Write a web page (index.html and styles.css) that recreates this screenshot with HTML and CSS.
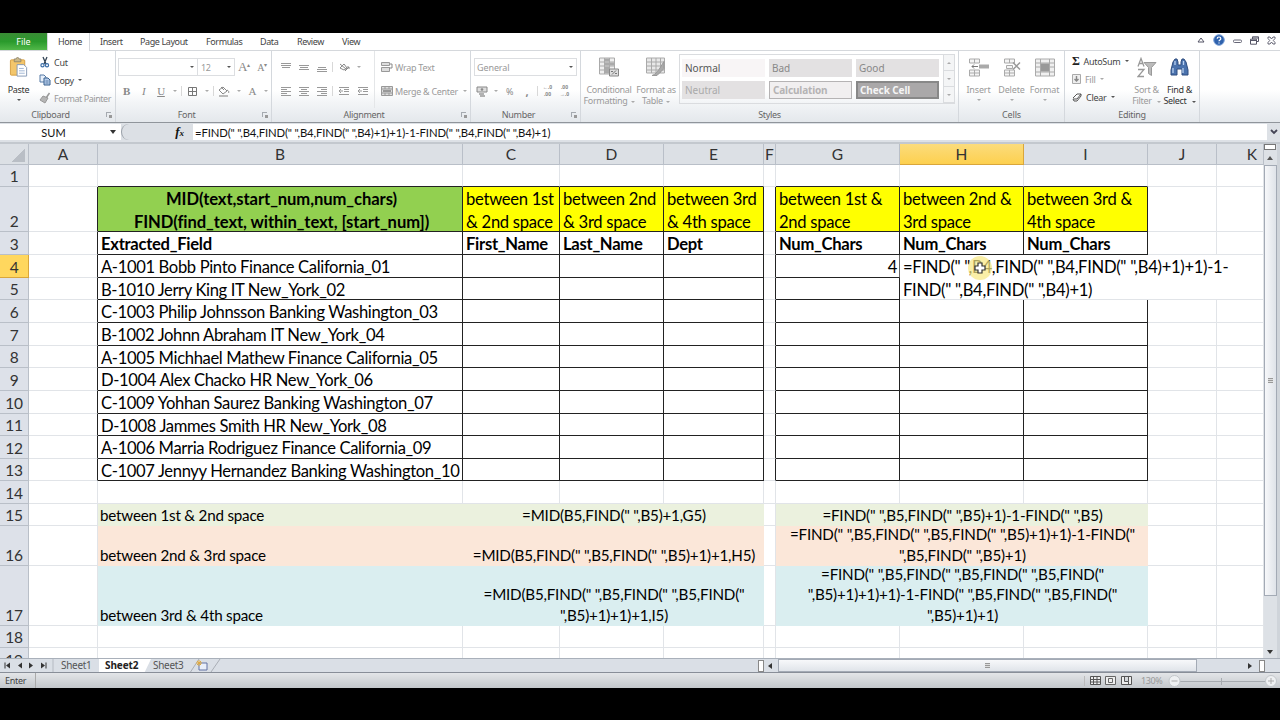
FILE: index.html
```html
<!DOCTYPE html>
<html lang="en">
<head>
    <meta charset="UTF-8">
    <meta name="viewport" content="width=device-width, initial-scale=1.0">
    <title>Spreadsheet</title>
    <link rel="stylesheet" href="styles.css">
</head>
<body>
    <svg class="defs">
      <symbol id="top" viewBox="0 0 10 10"><path d="M0 1.5h10M0 3.5h10M1 5.5h8" /></symbol>
      <symbol id="middle" viewBox="0 0 10 10"><path d="M0 3.5h10M1 5.5h8M0 7.5h10" /></symbol>
      <symbol id="bottom" viewBox="0 0 10 10"><path d="M1 5.5h8M0 7.5h10M0 9.5h10" /></symbol>
      <symbol id="left" viewBox="0 0 10 10"><path d="M0 1.5h10M0 3.5h6M0 5.5h10M0 7.5h6M0 9.5h10" /></symbol>
      <symbol id="center" viewBox="0 0 10 10"><path d="M0 1.5h10M2 3.5h6M0 5.5h10M2 7.5h6M0 9.5h10" /></symbol>
      <symbol id="right" viewBox="0 0 10 10"><path d="M0 1.5h10M4 3.5h6M0 5.5h10M4 7.5h6M0 9.5h10" /></symbol>
      <symbol id="indent" viewBox="0 0 10 10"><path d="M0 1.5h10M5 3.5h5M5 5.5h5M0 8.5h10M4 5H0M2 3L0 5l2 2" /></symbol>
    </svg>

    <div class="app">
      <div class="tabs">
        <div class="file">File</div>
        <div class="tab active">Home</div>
        <div class="tab insert">Insert</div>
        <div class="tab layout">Page Layout</div>
        <div class="tab formulas">Formulas</div>
        <div class="tab data">Data</div>
        <div class="tab review">Review</div>
        <div class="tab view">View</div>
        <div class="window-buttons">
          <svg width="8" height="8" viewBox="0 0 8 8"><path d="M1 6l3-4 3 4z" fill="#fff" stroke="#556" /></svg>
          <svg width="12" height="12" viewBox="0 0 12 12"><circle cx="6" cy="6" r="5.3" fill="#2f62ad" stroke="#7fa3d8" /><path d="M4.2 4.8c0-2.4 3.6-2.4 3.6 0 0 1.2-1.8 1.2-1.8 2.4M6 8.4v1.1" fill="none" stroke="#fff" stroke-width="1.2" /></svg>
          <svg width="9" height="9" viewBox="0 0 9 9"><rect x=".5" y="4" width="8" height="2.5" rx="1" fill="#fff" stroke="#667" /></svg>
          <svg width="9" height="9" viewBox="0 0 9 9"><path d="M2.5 3V.8h6v4.7H7M.5 3.2h6v5h-6zM1 4.5h5M3 2h5" fill="none" stroke="#556" /></svg>
          <svg width="9" height="9" viewBox="0 0 9 9"><path d="M1 1h2l1.5 2L6 1h2v1.500L6.300 4.500 8 6.500V8H6L4.500 6 3 8H1V6.500l1.700-2L1 2.500z" fill="#fff" stroke="#556" stroke-width=".9" /></svg>
        </div>
      </div>

      <div class="ribbon">
        <div class="group clipboard">
          <div class="group-body">
            <div class="big">
              <svg width="20" height="22" viewBox="0 0 20 22"><rect x="1" y="3" width="15" height="16" rx="1" fill="#f3c66b" stroke="#d79f43" /><path d="M5 4V2h2c0-2 3-2 3 0h2v3H5z" fill="#c9b88a" stroke="#867b62" stroke-width=".8" /><path d="M8 8h7l3 3v9H8z" fill="#fff" stroke="#8599b5" /><path d="M10 12h5M10 14.500h6M10 17h6" stroke="#9eb4d3" /></svg>
              <span>Paste</span>
              <i class="arrow"></i>
            </div>
            <div class="lines">
              <div class="line">
                <svg width="12" height="12" viewBox="0 0 12 12"><path d="M4 1l3 7M8 1L5 8" stroke="#345" stroke-width="1.300" /><circle cx="3.500" cy="9.200" r="1.600" fill="none" stroke="#3b6ea8" stroke-width="1.200" /><circle cx="8" cy="9.200" r="1.600" fill="none" stroke="#3b6ea8" stroke-width="1.200" /></svg>
                <span>Cut</span>
              </div>
              <div class="line">
                <svg width="12" height="12" viewBox="0 0 12 12"><path d="M1 1h4l2 2v5H1z" fill="#e8f0fa" stroke="#5478a5" /><path d="M5 4h4l2 2v5H5z" fill="#b7cdea" stroke="#38608f" /><path d="M6.500 7h3M6.500 9h3" stroke="#38608f" stroke-width=".7" /></svg>
                <span>Copy</span><i class="arrow"></i>
              </div>
              <div class="line off">
                <svg width="12" height="12" viewBox="0 0 12 12"><path d="M10.500 1L7 6" stroke="#999" stroke-width="1.500" /><path d="M4 4l5 2-3 5-5-3z" fill="#b5b5b5" stroke="#999" /></svg>
                <span class="painter">Format Painter</span>
              </div>
            </div>
          </div>
          <div class="group-name">Clipboard<b class="launcher"></b></div>
        </div>

        <div class="group font">
          <div class="group-body stack">
            <div class="row">
              <div class="combo family"><span></span><i class="arrow"></i></div>
              <div class="combo size"><span>12</span><i class="arrow"></i></div>
              <span class="tool serif grow">A<sup>▴</sup></span>
              <span class="tool serif shrink">A<sup>▾</sup></span>
            </div>
            <div class="row">
              <span class="tool serif"><b>B</b></span>
              <span class="tool serif"><em>I</em></span>
              <span class="tool serif"><u>U</u></span>
              <i class="arrow pale"></i><i class="sep"></i>
              <span class="tool wide"><svg width="9" height="9" viewBox="0 0 9 9"><path d="M.5.5h8v8h-8zM4.500.5v8M.5 4.500h8" fill="none" stroke="#777" /></svg></span>
              <i class="arrow pale"></i><i class="sep"></i>
              <span class="tool wide"><svg width="12" height="11" viewBox="0 0 12 11"><path d="M1 4l4-3 4 4-4 3zM3 1l3 3M9 4c2 1 2 2 1.500 3" fill="none" stroke="#888" /><path d="M1 10h9" stroke="#bbb" stroke-width="2" /></svg></span>
              <i class="arrow pale"></i>
              <span class="tool serif">A</span>
              <i class="arrow pale"></i>
            </div>
          </div>
          <div class="group-name">Font<b class="launcher"></b></div>
        </div>

        <div class="group alignment">
          <div class="group-body">
            <div class="stack align-tools">
              <div class="row">
                <span class="tool"><svg class="ic"><use href="#top" /></svg></span>
                <span class="tool"><svg class="ic"><use href="#middle" /></svg></span>
                <span class="tool"><svg class="ic"><use href="#bottom" /></svg></span>
                <i class="sep"></i>
                <span class="tool wide"><svg width="11" height="10" viewBox="0 0 11 10"><path d="M1 2l6 5M1 6l4-4 3 4-3 2zM6 9l4-4M8 5h2v2" fill="none" stroke="#888" /></svg></span>
                <i class="arrow pale"></i>
              </div>
              <div class="row">
                <span class="tool"><svg class="ic"><use href="#left" /></svg></span>
                <span class="tool"><svg class="ic"><use href="#center" /></svg></span>
                <span class="tool"><svg class="ic"><use href="#right" /></svg></span>
                <i class="sep"></i>
                <span class="tool wide"><svg class="ic"><use href="#indent" /></svg></span>
                <span class="tool"><svg class="ic"><use href="#indent" /></svg></span>
              </div>
            </div>
            <div class="stack wrap-tools">
              <div class="row off">
                <svg width="12" height="10" viewBox="0 0 12 10"><path d="M.5.5h8v3h-8zM.5 5.500h8v4h-8z" fill="#ddd" stroke="#999" /><path d="M9 2h2v4H8" fill="none" stroke="#888" /></svg>
                <span class="wrap-text">Wrap Text</span>
              </div>
              <div class="row off">
                <svg width="12" height="10" viewBox="0 0 12 10"><path d="M.5.5h11v9H.5zM.5 3h11M.5 7h11M4 .5V3M8 .5V3M4 7v2.500M8 7v2.500" fill="#ddd" stroke="#999" /><path d="M2 5h8" stroke="#555" /></svg>
                <span class="merge-text">Merge &amp; Center</span><i class="arrow pale"></i>
              </div>
            </div>
          </div>
          <div class="group-name">Alignment<b class="launcher"></b></div>
        </div>

        <div class="group number">
          <div class="group-body stack">
            <div class="row">
              <div class="combo general"><span>General</span><i class="arrow"></i></div>
            </div>
            <div class="row">
              <span class="tool"><svg width="12" height="11" viewBox="0 0 12 11"><path d="M1 1h10v5H1z" fill="#ddd" stroke="#888" /><circle cx="6" cy="3.500" r="1.300" fill="#888" /><path d="M3 8h5M4 10h5" stroke="#999" stroke-width="1.500" /></svg></span>
              <i class="arrow pale"></i>
              <span class="tool percent-sign">%</span>
              <span class="tool comma">,</span>
              <i class="sep"></i>
              <span class="tool dec"><span>←.0</span><span>.00</span></span>
              <span class="tool dec"><span>.00</span><span>→.0</span></span>
            </div>
          </div>
          <div class="group-name">Number<b class="launcher"></b></div>
        </div>

        <div class="group style-group">
          <div class="group-body">
            <div class="big off cond">
              <svg width="20" height="20" viewBox="0 0 20 20"><path d="M.5.500h15v16H.5zM.5 4.500h15M.5 8.500h15M.5 12.500h15M5.500.5v16M10.500.5v16" fill="#eee" stroke="#aaa" /><path d="M6 1h4v3H6zM6 5h9v3H6zM6 9h4v7H6z" fill="#aaa" /><path d="M10.500 11.500h9v7h-9z" fill="#ddd" stroke="#888" /><path d="M12 14h2M16 16h2M13 17l4-4" stroke="#777" /></svg>
              <span>Conditional</span>
              <span>Formatting<i class="arrow pale"></i></span>
            </div>
            <div class="big off">
              <svg width="20" height="20" viewBox="0 0 20 20"><path d="M.5.500h18v15H.5zM.5 4.500h18M.5 8.500h18M.5 12.500h18M5.500.5v15M10 .5v15M14.500.5v15" fill="#e8e8e8" stroke="#aaa" /><path d="M18 4v7l-7 7H6c4-1 5-4 7-6z" fill="#aaa" stroke="#999" /></svg>
              <span>Format as</span>
              <span>Table<i class="arrow pale"></i></span>
            </div>
            <div class="gallery">
              <div class="swatches">
                <div class="swatch normal">Normal</div>
                <div class="swatch bad">Bad</div>
                <div class="swatch good">Good</div>
                <div class="swatch neutral">Neutral</div>
                <div class="swatch calculation">Calculation</div>
                <div class="swatch check">Check Cell</div>
              </div>
              <div class="gallery-scroll">
                <div><i class="arrow up pale"></i></div>
                <div><i class="arrow pale"></i></div>
                <div><i class="arrow pale"></i></div>
              </div>
            </div>
          </div>
          <div class="group-name">Styles</div>
        </div>

        <div class="group cells">
          <div class="group-body">
            <div class="big off">
              <svg width="20" height="20" viewBox="0 0 20 20"><path d="M.5 1.500h10v4H.5zM5.500 1.500v4M.5 12.500h10v6H.5zM5.500 12.500v6M.5 15.500h10" fill="#f4f4f4" stroke="#aaa" /><path d="M10 7h10v4H10z" fill="#aaa" /><path d="M9 9H3M5 7L3 9l2 2" fill="none" stroke="#777" /></svg>
              <span>Insert</span><i class="arrow pale"></i>
            </div>
            <div class="big off">
              <svg width="20" height="20" viewBox="0 0 20 20"><path d="M2.500 1.500h10v4h-10zM7.500 1.500v4M2.500 12.500h10v6h-10zM7.500 12.500v6M2.500 15.500h10M4.500 8h6v3h-6z" fill="#f4f4f4" stroke="#aaa" /><path d="M11 5l7 7M18 5l-7 7" stroke="#999" stroke-width="1.500" /></svg>
              <span>Delete</span><i class="arrow pale"></i>
            </div>
            <div class="big off">
              <svg width="20" height="20" viewBox="0 0 20 20"><path d="M.5 1.500h19v17H.5zM.5 5.500h19M.5 9.500h19M.5 14.500h19M5.500 1.500v17M14.500 1.500v17" fill="#f0f0f0" stroke="#aaa" /><path d="M6 6h8v8H6z" fill="#999" /></svg>
              <span>Format</span><i class="arrow pale"></i>
            </div>
          </div>
          <div class="group-name">Cells</div>
        </div>

        <div class="group editing">
          <div class="group-body">
            <div class="lines">
              <div class="line"><span class="sigma">Σ</span><span>AutoSum</span><i class="arrow"></i></div>
              <div class="line off">
                <svg width="9" height="10" viewBox="0 0 9 10"><path d="M.5.500h8v9h-8z" fill="#eee" stroke="#aaa" /><path d="M4.500 2v5M2.500 5l2 2 2-2" fill="none" stroke="#888" stroke-width="1.400" /></svg>
                <span>Fill</span><i class="arrow pale"></i>
              </div>
              <div class="line">
                <svg width="10" height="9" viewBox="0 0 10 9"><path d="M1 5l4-4h4L5 6H1l1 2h3l4-5V1" fill="#fff" stroke="#555" /></svg>
                <span>Clear</span><i class="arrow"></i>
              </div>
            </div>
            <div class="big off sort">
              <svg width="20" height="20" viewBox="0 0 20 20"><path d="M1 9l3-8 3 8M2 6h4M1 12h6L1 19h6" fill="none" stroke="#999" stroke-width="1.300" /><path d="M7 5h12l-4.500 5v8l-3-2v-6z" fill="#bbb" stroke="#999" /></svg>
              <span>Sort &amp;</span>
              <span>Filter <i class="arrow pale"></i></span>
            </div>
            <div class="big">
              <svg width="19" height="19" viewBox="0 0 19 19"><path d="M3 4l2-3h2l1 3v3h3V4l1-3h2l2 3 2 8v5h-6v-6H7v6H1v-5z" fill="#4a72ad" stroke="#2e4c7e" /><path d="M3 10v5M13 10v5M5 3v4M13.500 3v4" stroke="#b8d0f0" stroke-width="1.300" /></svg>
              <span>Find &amp;</span>
              <span>Select <i class="arrow"></i></span>
            </div>
          </div>
          <div class="group-name">Editing</div>
        </div>
      </div>

      <div class="formula-bar">
        <div class="name-box"><span>SUM</span><i class="arrow dark"></i></div>
        <div class="fx"><span class="knob"></span><span class="fx-label">f<small>x</small></span></div>
        <div class="formula">=FIND(" ",B4,FIND(" ",B4,FIND(" ",B4)+1)+1)-1-FIND(" ",B4,FIND(" ",B4)+1)</div>
        <div class="expand"><svg width="8" height="6" viewBox="0 0 8 6"><path d="M1 1l3 3 3-3" fill="none" stroke="#445" stroke-width="1.800" /></svg></div>
      </div>

      <div class="work">
        <div class="sheet">
          <div class="corner"></div><div class="ch">A</div><div class="ch">B</div><div class="ch">C</div><div class="ch">D</div><div class="ch">E</div><div class="ch">F</div><div class="ch">G</div><div class="ch on">H</div><div class="ch">I</div><div class="ch">J</div><div class="ch k">K</div>

          <div class="rh">1</div><div></div><div class="kb"></div><div class="kb"></div><div class="kb"></div><div class="kb"></div><div></div><div class="kb"></div><div class="kb"></div><div class="kb"></div><div></div><div></div>

          <div class="rh">2</div><div class="kr"></div>
          <div class="box title"><span class="t1">MID(text,start_num,num_chars)</span><span class="t2">FIND(find_text, within_text, [start_num])</span></div>
          <div class="box note">between 1st<br>&amp; 2nd space</div><div class="box note">between 2nd<br>&amp; 3rd space</div><div class="box note">between 3rd<br>&amp; 4th space</div><div class="kr"></div>
          <div class="box note">between 1st &amp;<br>2nd space</div><div class="box note">between 2nd &amp;<br>3rd space</div><div class="box note">between 3rd &amp;<br>4th space</div><div></div><div></div>

          <div class="rh">3</div><div class="kr"></div><div class="box head">Extracted_Field</div><div class="box head">First_Name</div><div class="box head">Last_Name</div><div class="box head">Dept</div><div class="kr"></div><div class="box head">Num_Chars</div><div class="box head">Num_Chars</div><div class="box head">Num_Chars</div><div></div><div></div>

          <div class="rh on">4</div><div class="kr"></div><div class="box">A-1001 Bobb Pinto Finance California_01</div><div class="box"></div><div class="box"></div><div class="box"></div><div class="kr"></div><div class="box num">4</div>
          <div class="edit"><span>=FIND(" ",B4,FIND(" ",B4,FIND(" ",B4)+1)+1)-1-</span><span class="e2">FIND(" ",B4,FIND(" ",B4)+1)</span>
            <div class="pointer"><svg width="12" height="12" viewBox="0 0 12 12"><path d="M4 1h4v3h3v4H8v3H4V8H1V4h3z" fill="#fff" stroke="#333" stroke-width="1.200" /></svg></div>
          </div>

          <div class="rh">5</div><div class="kr"></div><div class="box">B-1010 Jerry King IT New_York_02</div><div class="box"></div><div class="box"></div><div class="box"></div><div class="kr"></div><div class="box"></div>

          <div class="rh">6</div><div class="kr"></div><div class="box">C-1003 Philip Johnsson Banking Washington_03</div><div class="box"></div><div class="box"></div><div class="box"></div><div class="kr"></div><div class="box"></div><div class="box"></div><div class="box"></div><div></div><div></div>

          <div class="rh">7</div><div class="kr"></div><div class="box">B-1002 Johnn Abraham IT New_York_04</div><div class="box"></div><div class="box"></div><div class="box"></div><div class="kr"></div><div class="box"></div><div class="box"></div><div class="box"></div><div></div><div></div>

          <div class="rh">8</div><div class="kr"></div><div class="box">A-1005 Michhael Mathew Finance California_05</div><div class="box"></div><div class="box"></div><div class="box"></div><div class="kr"></div><div class="box"></div><div class="box"></div><div class="box"></div><div></div><div></div>

          <div class="rh">9</div><div class="kr"></div><div class="box">D-1004 Alex Chacko HR New_York_06</div><div class="box"></div><div class="box"></div><div class="box"></div><div class="kr"></div><div class="box"></div><div class="box"></div><div class="box"></div><div></div><div></div>

          <div class="rh">10</div><div class="kr"></div><div class="box">C-1009 Yohhan Saurez Banking Washington_07</div><div class="box"></div><div class="box"></div><div class="box"></div><div class="kr"></div><div class="box"></div><div class="box"></div><div class="box"></div><div></div><div></div>

          <div class="rh">11</div><div class="kr"></div><div class="box">D-1008 Jammes Smith HR New_York_08</div><div class="box"></div><div class="box"></div><div class="box"></div><div class="kr"></div><div class="box"></div><div class="box"></div><div class="box"></div><div></div><div></div>

          <div class="rh">12</div><div class="kr"></div><div class="box">A-1006 Marria Rodriguez Finance California_09</div><div class="box"></div><div class="box"></div><div class="box"></div><div class="kr"></div><div class="box"></div><div class="box"></div><div class="box"></div><div></div><div></div>

          <div class="rh">13</div><div class="kr"></div><div class="box">C-1007 Jennyy Hernandez Banking Washington_10</div><div class="box"></div><div class="box"></div><div class="box"></div><div class="kr"></div><div class="box"></div><div class="box"></div><div class="box"></div><div></div><div></div>

          <div class="rh">14</div><div></div><div></div><div></div><div></div><div></div><div></div><div></div><div></div><div></div><div></div><div></div>

          <div class="rh">15</div><div></div><div class="small green">between 1st &amp; 2nd space</div><div class="small green span3">=MID(B5,FIND(" ",B5)+1,G5)</div><div></div><div class="small green span3">=FIND(" ",B5,FIND(" ",B5)+1)-1-FIND(" ",B5)</div><div></div><div></div>

          <div class="rh">16</div><div></div><div class="small peach">between 2nd &amp; 3rd space</div><div class="small peach span3">=MID(B5,FIND(" ",B5,FIND(" ",B5)+1)+1,H5)</div><div></div><div class="small peach span3">=FIND(" ",B5,FIND(" ",B5,FIND(" ",B5)+1)+1)-1-FIND("<br>",B5,FIND(" ",B5)+1)</div><div></div><div></div>

          <div class="rh">17</div><div></div><div class="small blue">between 3rd &amp; 4th space</div><div class="small blue span3">=MID(B5,FIND(" ",B5,FIND(" ",B5,FIND("<br>",B5)+1)+1)+1,I5)</div><div></div><div class="small blue span3">=FIND(" ",B5,FIND(" ",B5,FIND(" ",B5,FIND("<br>",B5)+1)+1)+1)-1-FIND(" ",B5,FIND(" ",B5,FIND("<br>",B5)+1)+1)</div><div></div><div></div>

          <div class="rh">18</div><div></div><div></div><div></div><div></div><div></div><div></div><div></div><div></div><div></div><div></div><div></div>

          <div class="rh">19</div><div></div><div></div><div></div><div></div><div></div><div></div><div></div><div></div><div></div><div></div><div></div>
        </div>
        <div class="vscroll">
          <div class="split"></div>
          <div class="vbtn"><i class="arrow dark up"></i></div>
          <div class="vthumb"><span></span></div>
          <div class="vbtn down"><i class="arrow dark"></i></div>
        </div>
      </div>

      <div class="sheet-bar">
        <svg class="nav" width="54" height="13" viewBox="0 0 54 13"><path d="M10 3.500v6L6 6.500zM22 3.500v6l-4-3zM29 3.500v6l4-3zM41 3.500v6l4-3z" fill="#333" /><path d="M5 3.500v6M46 3.500v6" stroke="#333" /><path d="M53 0v13" stroke="#b5bac2" /></svg>
        <div class="sheet-tab">Sheet1</div>
        <div class="sheet-tab current">Sheet2</div>
        <div class="sheet-tab third">Sheet3</div>
        <svg class="new-sheet" width="34" height="13" viewBox="0 0 34 13"><path d="M.5 13L9 0M21 13L30 0" stroke="#a9aeb6" /><path d="M9 4h8v7H9z" fill="#e9effa" stroke="#6372a3" /><path d="M6 4h6M9 1v6M7 2l4 4M11 2L7 6" stroke="#dfaa42" /></svg>
        <div class="hscroll">
          <span class="grip"></span>
          <i class="side"></i>
          <div class="hthumb"><span></span></div>
          <i class="side next"></i>
          <span class="grip end"></span>
        </div>
      </div>

      <div class="status-bar">
        <div class="mode">Enter</div>
        <div class="views">
          <svg width="43" height="10" viewBox="0 0 43 10"><path d="M.5.500h10v8H.5zM.5 3.500h10M.5 6h10M3.500.500v8M7 .500v8" fill="#eee" stroke="#555" /><path d="M15.500.500h10v8h-10zM18.500 2.500h4v4h-4z" fill="#eee" stroke="#666" /><path d="M31.500.500h10v8h-10zM34.500.500v5h4v-5M38.500 5.500v3" fill="#eee" stroke="#555" /></svg>
        </div>
        <div class="percent">130%</div>
        <svg class="zoom" width="112" height="14" viewBox="0 0 112 14"><path d="M12 7.500h88M53.500 4v7" stroke="#a7abb0" /><circle cx="6.500" cy="7" r="5.500" fill="#eef0f2" stroke="#c3c7cb" /><path d="M3.500 7h6" stroke="#aaa" /><circle cx="103" cy="7" r="5.500" fill="#eef0f2" stroke="#c3c7cb" /><path d="M100 7h6M103 4v6" stroke="#aaa" /></svg>
      </div>
    </div>
</body>
</html>
```
FILE: styles.css
```css
* {
  box-sizing: border-box;
}
body {
  width: 1280px;
  height: 720px;
  margin: 0;
  padding: 33px 0 32px;
  overflow: hidden;
  background: #000;
  font-family: 'Noto Sans', sans-serif;
  font-size: 9px;
  color: #444;
}
svg {
  flex: none;
  display: block;
}
.defs {
  display: none;
}
.app {
  height: 655px;
  display: flex;
  flex-direction: column;
  background: #fff;
  overflow: hidden;
}

/* ribbon tabs */
.tabs {
  height: 18px;
  display: flex;
  line-height: 17px;
  border-bottom: 1px solid #d5d8dc;
}
.file {
  width: 47px;
  text-align: center;
  color: #fff;
  background: linear-gradient(#3a8c35, #2a9a2c 50%, #51b849);
}
.tab {
  padding-left: 10px;
  white-space: nowrap;
  letter-spacing: -0.4px;
}
.tab.active {
  width: 43px;
  height: 18px;
  margin-right: 1px;
  border: 1px solid #d5d8dc;
  border-width: 0 1px 0 1px;
  background: #fff;
}
.tab.insert { width: 39px; padding-left: 9px; }
.tab.layout { width: 66px; }
.tab.formulas { width: 54px; }
.tab.data { width: 37px; }
.tab.review { width: 45px; }
.window-buttons {
  margin-left: auto;
  padding: 0 4px 3px 0;
  display: flex;
  align-items: center;
  gap: 8px;
}

/* ribbon */
.ribbon {
  height: 71px;
  display: flex;
  letter-spacing: -0.3px;
  background: linear-gradient(#fff 55%, #f3f5f7 72%, #e4e8ec);
}
.group {
  display: flex;
  flex-direction: column;
  border-right: 1px solid #d4d8dd;
}
.clipboard { width: 116px; }
.font { width: 156px; }
.alignment { width: 199px; }
.number { width: 110px; }
.style-group { width: 378px; }
.cells { width: 106px; }
.editing { width: 135px; }
.group-body {
  height: 57px;
  display: flex;
}
.group-name {
  height: 14px;
  line-height: 13px;
  text-align: center;
  color: #666;
  position: relative;
}
.clipboard .group-name,
.font .group-name,
.alignment .group-name,
.number .group-name {
  padding-right: 14px;
}
.launcher {
  position: absolute;
  right: 4px;
  top: 4px;
  width: 5px;
  height: 5px;
  border: 1px solid #a5aab0;
  border-width: 1px 0 0 1px;
}
.launcher::after {
  content: "";
  position: absolute;
  left: 2px;
  top: 2px;
  width: 3px;
  height: 3px;
  background: #999;
}
.big {
  display: flex;
  flex-direction: column;
  align-items: center;
  padding-top: 6px;
  width: 37px;
  white-space: nowrap;
  line-height: 11px;
  color: #333;
}
.big svg {
  height: 21px;
  margin-bottom: 6px;
}
.big > .arrow {
  margin-top: 4px;
}
.off, .off.big {
  color: #9a9a9a;
}
.lines {
  padding: 2px 0 0 2px;
  display: flex;
  flex-direction: column;
}
.line {
  height: 18px;
  display: flex;
  align-items: center;
  gap: 3px;
  white-space: nowrap;
}
.arrow {
  display: inline-block;
  flex: none;
  width: 0;
  height: 0;
  margin: 0 3px;
  border: 2px solid transparent;
  border-top-color: #555;
  border-bottom: 0;
  vertical-align: middle;
}
.arrow.pale {
  border-top-color: #aaa;
}
.arrow.up {
  border-top: 0;
  border-bottom: 2px solid #aaa;
}
.line .arrow { margin-left: 1px; }
.big span .arrow { margin-right: 0; }
.arrow.dark {
  border-width: 4px 3.5px 0;
  border-top-color: #333;
}
.arrow.dark.up {
  border-width: 0 3.5px 4px;
  border-bottom-color: #555;
}
.stack {
  display: flex;
  flex-direction: column;
  padding: 4px 0 0 2px;
}
.row {
  height: 24px;
  display: flex;
  align-items: center;
  white-space: nowrap;
}
.tool {
  width: 18px;
  display: flex;
  justify-content: center;
  align-items: center;
  color: #888;
}
.tool.wide { width: 20px; }
.tool + .arrow { margin: 0 3px; }
.tool.serif {
  font-family: 'Liberation Serif', serif;
  font-size: 11px;
}
.tool sup {
  font-size: 6px;
  margin-top: -5px;
}
.tool.grow { width: 19px; font-size: 13px; }
.tool.shrink { font-size: 10px; }
.sep {
  width: 1px;
  height: 10px;
  margin: 0 1px;
  background: #d8d8d8;
}
.combo {
  height: 18px;
  display: flex;
  align-items: center;
  justify-content: space-between;
  border: 1px solid #dcdee1;
  padding-left: 3px;
  color: #999;
}
.family { width: 81px; }
.size { width: 37px; border-left: 0; }
.general {
  width: 103px;
  margin-left: 1px;
  padding-left: 2px;
  letter-spacing: -0.1px;
}
.ic {
  width: 10px;
  height: 10px;
  fill: none;
  stroke: #999;
}
.align-tools {
  width: 103px;
  padding-left: 5px;
}
.wrap-tools {
  padding-left: 6px;
  border-left: 1px solid #e4e6e8;
}
.wrap-tools .row { gap: 2px; }
.percent-sign { width: 17px; }
.comma {
  font-weight: bold;
  font-size: 11px;
}
.tool.dec {
  width: 17px;
  flex-direction: column;
  font-size: 5px;
  line-height: 7px;
  font-weight: bold;
  letter-spacing: 0;
}
.painter { letter-spacing: -0.45px; }
.cond { width: 56px; }
.cond + .big { width: 38px; }
.gallery {
  width: 276px;
  height: 50px;
  margin: 3px 0 0 4px;
  display: flex;
  border: 1px solid #dadcdf;
}
.swatches {
  flex: 1;
  display: grid;
  grid-template-columns: repeat(3, 83px);
  grid-template-rows: 18px 18px;
  gap: 4px;
  padding: 4px 0 0 2px;
}
.swatch {
  padding-left: 3px;
  font-size: 10px;
  line-height: 18px;
  letter-spacing: 0;
  background: #e3e1e2;
  color: #888;
}
.normal { background: #f8f5f6; color: #555; }
.neutral { color: #aaa; }
.calculation {
  background: #f1eff0;
  border: 1px solid #b5b3b4;
  line-height: 16px;
  font-weight: bold;
  letter-spacing: -0.15px;
  color: #b5b3b4;
}
.check {
  background: #aaa8a9;
  border: 2px double #888;
  padding-left: 2px;
  line-height: 14px;
  font-weight: bold;
  letter-spacing: -0.1px;
  color: #f5f5f5;
}
.gallery-scroll {
  width: 11px;
  display: grid;
  grid-template-rows: repeat(3, 1fr);
  border-left: 1px solid #dadcdf;
}
.gallery-scroll div {
  display: flex;
  align-items: center;
  border-bottom: 1px solid #dadcdf;
  background: #f4f5f6;
}
.cells .big { width: 33px; }
.cells .big:first-child { margin-left: 3px; }
.cells { letter-spacing: -0.15px; }
.editing .lines {
  width: 65px;
  padding: 1px 0 0 7px;
}
.editing .line { gap: 4px; }
.sigma {
  width: 8px;
  font-family: 'Liberation Serif', serif;
  font-size: 12px;
  font-weight: bold;
  color: #222;
}
.editing .big { width: 33px; }

/* formula bar */
.formula-bar {
  height: 22px;
  padding: 1px 0 2px;
  display: flex;
  border-top: 1px solid #90959b;
  border-bottom: 2px solid #c3c8ce;
  background: #dde1e6;
  font-family: Lato, sans-serif;
  color: #111;
}
.name-box {
  width: 121px;
  display: flex;
  align-items: center;
  background: #fff;
  font-size: 11px;
}
.name-box span {
  width: 107px;
  text-align: center;
}
.fx {
  width: 72px;
  display: flex;
  align-items: center;
  justify-content: space-between;
  background: #dce0e5;
}
.knob {
  width: 40px;
  height: 16px;
  border-left: 1px solid #9aa0a8;
  border-radius: 8px;
}
.fx-label {
  padding-right: 9px;
  font: italic bold 13px 'Liberation Serif', serif;
}
.fx-label small { font-size: 9px; }
.formula {
  flex: 1;
  padding-left: 2px;
  background: #fff;
  font-size: 11.3px;
  letter-spacing: -0.135px;
  line-height: 17px;
  white-space: nowrap;
}
.expand {
  width: 13px;
  display: flex;
  align-items: center;
  justify-content: center;
}

/* worksheet */
.work {
  height: 514px;
  display: flex;
  overflow: hidden;
}
.sheet {
  width: 1264px;
  display: grid;
  grid-template-columns: 29px 69px 365px 97px 104px 100px 12px 124px 124px 124px 69px 47px;
  grid-template-rows: 21px 22px 45px 23px 23px 22px 23px 23px 22px 23px 23px 22px 23px 22px 23px 22px 40px 60px 22px 23px;
  font-family: Lato, sans-serif;
  font-size: 16.6px;
  line-height: 22.6px;
  color: #000;
}
.sheet > div {
  min-width: 0;
  min-height: 0;
  white-space: nowrap;
  border-right: 1px solid #e1e4e8;
  border-bottom: 1px solid #e1e4e8;
}
.sheet > .kb { border-bottom-color: #222; }
.sheet > .kr { border-right-color: #222; }
.sheet > .box {
  padding: 1px 0 0 3px;
  border-color: #222;
  letter-spacing: -0.36px;
}
.sheet > .ch, .sheet > .corner, .sheet > .rh {
  background: #dce0e5;
  border-color: #b9bfc8;
  color: #333;
}
.sheet > .ch {
  text-align: center;
  font-size: 15.5px;
  line-height: 21px;
}
.sheet > .ch.k { padding-left: 24px; }
.sheet > .corner {
  background: linear-gradient(135deg, transparent 50%, #b9bec5 50%) 12px 5px / 13px 13px no-repeat #dce0e5;
}
.sheet > .rh {
  display: flex;
  align-items: flex-end;
  justify-content: center;
  font-size: 15.5px;
  line-height: 19px;
  letter-spacing: -0.3px;
  background: #dde1e9;
}
.sheet > .ch.on {
  background: linear-gradient(#fbdc7c, #fdd04f);
  border-color: #d9a63b;
}
.sheet > .rh.on {
  background: #ffd75e;
  border-color: #d9a63b;
}
.sheet > .title {
  display: flex;
  flex-direction: column;
  align-items: center;
  background: #92d050;
  font-weight: bold;
  letter-spacing: -0.08px;
}
.sheet > .note {
  background: #ff0;
  letter-spacing: -0.27px;
}
.sheet > .head {
  font-weight: bold;
  letter-spacing: -0.28px;
}
.sheet > .num {
  text-align: right;
  padding-right: 2px;
  border-right-color: #666;
}
.sheet > .edit {
  grid-row: span 2;
  grid-column: span 4;
  padding: 1px 0 0 3px;
  display: flex;
  flex-direction: column;
  align-items: flex-start;
  position: relative;
  letter-spacing: -0.3px;
}
.pointer {
  position: absolute;
  left: 68px;
  top: 1px;
  width: 24px;
  height: 24px;
  display: flex;
  align-items: center;
  justify-content: center;
  border-radius: 50%;
  background: rgba(248, 232, 130, 0.7);
}
.sheet > .small {
  display: flex;
  align-items: flex-end;
  padding-left: 2px;
  font-size: 15.2px;
  line-height: 20.4px;
  letter-spacing: -0.21px;
  border-color: transparent;
}
.sheet > .span3 {
  grid-column: span 3;
  justify-content: center;
  text-align: center;
}
.green { background: #ebf1de; }
.peach { background: #fbe7d9; }
.blue { background: #daeef0; }

.vscroll {
  width: 16px;
  display: flex;
  flex-direction: column;
  align-items: flex-start;
  background: #dde1e6;
  border-right: 3px solid #cfd4da;
}
.split {
  width: 12px;
  height: 6px;
  border: 1px solid #777;
  background: #fff;
}
.vbtn {
  height: 15px;
}
.vthumb {
  width: 13px;
  height: 431px;
  display: flex;
  align-items: center;
  justify-content: center;
  border: 1px solid #a3aab5;
  background: linear-gradient(90deg, #f7f8fa, #dfe3e9);
}
.vthumb span, .hthumb span {
  width: 5px;
  height: 5px;
  background: repeating-linear-gradient(#999 0 1px, #ddd 1px 2px);
}
.vbtn.down {
  margin-top: auto;
  height: 14px;
}

/* sheet tabs */
.sheet-bar {
  height: 14px;
  display: flex;
  border-top: 1px solid #a9b0ba;
  background: #dadfe6;
  line-height: 13px;
}
.sheet-tab {
  width: 45px;
  padding-left: 7px;
  font-size: 10px;
  letter-spacing: -0.3px;
  color: #555;
}
.sheet-tab.current {
  width: 52px;
  background: #fff;
  font-weight: bold;
  color: #222;
  padding-left: 6px;
  letter-spacing: -0.1px;
  clip-path: polygon(0 0, 100% 0, 88% 100%, 0 100%);
}
.sheet-tab.third {
  width: 39px;
  padding-left: 2px;
}
.hscroll {
  width: 507px;
  margin-left: auto;
  margin-right: 15px;
  display: flex;
  align-items: center;
}
.grip {
  width: 6px;
  height: 12px;
  border: 1px solid #888;
  background: #fff;
}
.grip.end {
  margin-left: auto;
}
.side {
  margin: 0 6px 0 4px;
  border: 3.5px solid transparent;
  border-right: 4px solid #333;
  border-left: 0;
}
.side.next {
  margin: 0 0 0 51px;
  border-right: 0;
  border-left: 4px solid #333;
}
.hthumb {
  width: 419px;
  height: 13px;
  display: flex;
  align-items: center;
  justify-content: center;
  border: 1px solid #a3aab5;
  background: linear-gradient(#f7f8fa, #e0e4ea);
}

/* status bar */
.status-bar {
  height: 16px;
  display: flex;
  align-items: center;
  border-top: 1px solid #888e98;
  background: linear-gradient(#e3e5e8, #c3c7cb);
}
.mode {
  width: 36px;
  padding-left: 5px;
  border-right: 1px solid #aaa;
  line-height: 15px;
  letter-spacing: -0.3px;
}
.views {
  margin-left: auto;
  padding-left: 5px;
  border-left: 1px solid #bbb;
}
.percent {
  width: 35px;
  padding-left: 8px;
  letter-spacing: -0.4px;
  color: #999;
}
```
